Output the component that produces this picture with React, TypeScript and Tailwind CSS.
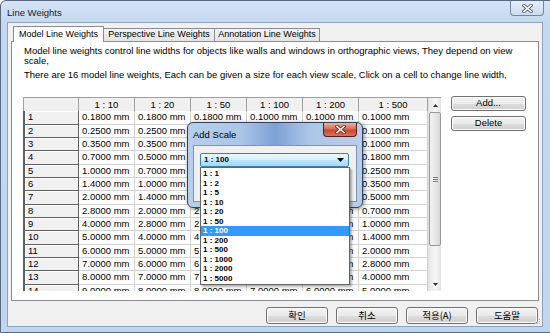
import React from 'react'

const scales = ['1 : 10', '1 : 20', '1 : 50', '1 : 100', '1 : 200', '1 : 500']

const weights: string[][] = [
  ['0.1800', '0.1800', '0.1800', '0.1000', '0.1000', '0.1000'],
  ['0.2500', '0.2500', '0.2500', '0.1000', '0.1000', '0.1000'],
  ['0.3500', '0.3500', '0.3500', '0.1800', '0.1000', '0.1000'],
  ['0.7000', '0.5000', '0.5000', '0.2500', '0.1800', '0.1800'],
  ['1.0000', '0.7000', '0.7000', '0.3500', '0.2500', '0.2500'],
  ['1.4000', '1.0000', '1.0000', '0.5000', '0.3500', '0.3500'],
  ['2.0000', '1.4000', '1.4000', '0.7000', '0.5000', '0.5000'],
  ['2.8000', '2.0000', '2.0000', '1.0000', '0.7000', '0.7000'],
  ['4.0000', '2.8000', '2.8000', '1.4000', '1.0000', '1.0000'],
  ['5.0000', '4.0000', '4.0000', '2.0000', '1.4000', '1.4000'],
  ['6.0000', '5.0000', '5.0000', '2.8000', '2.0000', '2.0000'],
  ['7.0000', '6.0000', '6.0000', '4.0000', '2.8000', '2.8000'],
  ['8.0000', '7.0000', '7.0000', '5.0000', '4.0000', '4.0000'],
  ['9.0000', '8.0000', '8.0000', '7.0000', '6.0000', '5.0000'],
]

const scaleOptions = ['1 : 1', '1 : 2', '1 : 5', '1 : 10', '1 : 20', '1 : 50', '1 : 100', '1 : 200', '1 : 500', '1 : 1000', '1 : 2000', '1 : 5000']

function WinButton({ children, className = '' }: { children: React.ReactNode; className?: string }) {
  return (
    <div
      className={`flex items-center justify-center rounded-[3px] border border-[#707070] bg-[linear-gradient(180deg,#f2f2f2_0%,#ebebeb_50%,#dddddd_51%,#cfcfcf_100%)] shadow-[inset_0_0_0_1px_#fcfcfc] ${className}`}
    >
      {children}
    </div>
  )
}

function CloseGlyph({ fill = '#fff', outline = '#59606b' }: { fill?: string; outline?: string }) {
  return (
    <svg width="11" height="9" viewBox="0 0 11 9">
      <path d="M2 1.5 L9 7.5 M9 1.5 L2 7.5" stroke={outline} strokeWidth="3.4" strokeLinecap="square" />
      <path d="M2 1.5 L9 7.5 M9 1.5 L2 7.5" stroke={fill} strokeWidth="1.6" strokeLinecap="square" />
    </svg>
  )
}

function Scrollbar() {
  return (
    <div className="flex w-[13px] flex-col border-l border-[#e3e3e3] bg-[linear-gradient(90deg,#e6e6e6,#f4f4f4_40%,#f4f4f4_60%,#e6e6e6)]">
      <div className="flex h-[14px] items-center justify-center">
        <svg width="5" height="3" viewBox="0 0 5 3">
          <path d="M0 3 L2.5 0 L5 3 Z" fill="#333" />
        </svg>
      </div>
      <div className="flex h-[134px] items-center justify-center rounded-[2px] border border-[#979797] bg-[linear-gradient(90deg,#f3f3f3,#e8e8e8_50%,#d8d8d8)]">
        <div className="flex flex-col gap-[1px]">
          <div className="h-px w-[5px] bg-[#7e7e7e]" />
          <div className="h-px w-[5px] bg-[#7e7e7e]" />
          <div className="h-px w-[5px] bg-[#7e7e7e]" />
        </div>
      </div>
      <div className="flex-1" />
      <div className="flex h-[14px] items-center justify-center">
        <svg width="5" height="3" viewBox="0 0 5 3">
          <path d="M0 0 L2.5 3 L5 0 Z" fill="#333" />
        </svg>
      </div>
    </div>
  )
}

function WeightGrid() {
  return (
    <div className="flex h-[194px] w-[418px] overflow-hidden border-t border-[#a0a0a0]">
      <div className="grid h-max w-[405px] grid-cols-[56px_56px_56px_56px_56px_56px_69px] auto-rows-[13.33px] text-[9.5px] leading-[12px] text-black">
        <div className="h-[15px] border-b border-l border-r border-[#a0a0a0] bg-[#f0f0f0]" />
        {scales.map((s) => (
          <div key={s} className="flex h-[15px] items-center justify-center border-b border-r border-[#a0a0a0] bg-[#f0f0f0]">
            {s}
          </div>
        ))}
        {weights.map((row, i) => (
          <React.Fragment key={i}>
            <div className="flex items-center border-b border-l-2 border-r border-[#5f5f5f] bg-[#f0f0f0] pl-[3px] shadow-[inset_1px_1px_0_#fff]">
              {i + 1}
            </div>
            {row.map((v, j) => (
              <div key={j} className="flex items-center border-b border-r border-[#d2d2d2] bg-white pl-[3px]">
                {v} mm
              </div>
            ))}
          </React.Fragment>
        ))}
      </div>
      <Scrollbar />
    </div>
  )
}

function AddScaleDialog() {
  return (
    <div className="absolute left-[187px] top-[122px] z-20 flex h-[86px] w-[176px] flex-col rounded-[6px] border border-[#34435a] bg-[linear-gradient(90deg,#b8cfea_0%,#acc6e7_30%,#7ea2d6_50%,#acc6e7_70%,#b8cfea_100%)] shadow-[1px_1px_4px_rgba(0,0,0,0.45)]">
      <div className="flex h-[22px] items-start justify-between">
        <span className="mt-[5px] pl-[5px] text-[9.5px] text-black">Add Scale</span>
        <div className="mr-[5px] flex h-[14px] w-[34px] items-center justify-center rounded-b-[4px] border border-t-0 border-[#5a1e16] bg-[linear-gradient(180deg,#eab1a3_0%,#d7705a_45%,#c7472f_55%,#d5765c_100%)]">
          <CloseGlyph fill="#fff" outline="#7b2a1c" />
        </div>
      </div>
      <div className="relative mx-[5px] mb-[5px] flex-1 border border-[#7d93b3] bg-[#f0f0f0]">
        <div className="ml-[6px] mt-[7px] flex h-[14px] w-[149px] items-center justify-between rounded-[2px] border border-[#3c7fb1] bg-[linear-gradient(180deg,#eaf6fd_0%,#d9f0fc_45%,#bee6fd_50%,#a7d9f5_100%)] pl-[3px] pr-[4px]">
          <span className="text-[8px] font-bold leading-none text-black">1 : 100</span>
          <svg width="7" height="4" viewBox="0 0 7 4">
            <path d="M0 0 L7 0 L3.5 4 Z" fill="#000" />
          </svg>
        </div>
        <div className="absolute left-[6px] top-[21px] z-30 flex w-[150px] flex-col border border-[#646464] bg-white py-[1px] shadow-[2px_2px_2px_rgba(0,0,0,0.3)]">
          {scaleOptions.map((o) => (
            <div
              key={o}
              className={`h-[9.5px] pl-[2px] text-[8px] font-bold leading-[9.5px] ${o === '1 : 100' ? 'bg-[#3399ff] text-white' : 'text-black'}`}
            >
              {o}
            </div>
          ))}
        </div>
      </div>
    </div>
  )
}

export default function App() {
  const tabs = [
    { label: 'Perspective Line Weights', w: 'w-[112px]' },
    { label: 'Annotation Line Weights', w: 'w-[106px]' },
  ]

  return (
    <div className="relative h-[333px] w-[550px] overflow-hidden bg-white font-['Liberation_Sans',Arial,sans-serif]">
      <div className="flex h-[333px] w-[556px] flex-col rounded-t-[6px] border border-[#5a6780] bg-[linear-gradient(180deg,#d6e4f5_0px,#c4d8ef_22px,#c1d5ee_100%)]">
        <div className="flex h-[21px] items-start justify-between">
          <span className="mt-[5px] pl-[6px] text-[9.5px] text-[#1b1b1b]">Line Weights</span>
          <div className="mr-[11px] flex h-[15px] w-[34px] items-center justify-center rounded-b-[4px] border border-t-0 border-[#7487a3] bg-[linear-gradient(180deg,#e4edf8,#cbdcf0)]">
            <CloseGlyph />
          </div>
        </div>

        <div className="mb-[5px] ml-[6px] mr-[12px] flex flex-1 flex-col border border-[#8ea3bf] bg-[#f0f0f0]">
          <div className="flex h-[18px] items-end pl-[5px] pt-[3px] text-[9px] text-black">
            <div className="relative z-10 -mb-px flex h-[16px] w-[91px] items-center justify-center border border-b-0 border-[#898c95] bg-white">
              Model Line Weights
            </div>
            {tabs.map((t) => (
              <div
                key={t.label}
                className={`-ml-px flex h-[13px] ${t.w} items-center justify-center border border-b-0 border-[#898c95] bg-[linear-gradient(180deg,#f3f3f3,#e4e4e4)]`}
              >
                {t.label}
              </div>
            ))}
          </div>

          <div className="mx-[3px] flex flex-1 flex-col border border-[#898c95] bg-white">
            <div className="pl-[12px] pt-[4px] text-[9.5px] leading-[10px] text-black">
              <div className="whitespace-nowrap">
                Model line weights control line widths for objects like walls and windows in orthographic views, They depend on view
              </div>
              <div className="whitespace-nowrap">scale,</div>
              <div className="mt-[4px] whitespace-nowrap">
                There are 16 model line weights, Each can be given a size for each view scale, Click on a cell to change line width,
              </div>
            </div>

            <div className="ml-[11px] mt-[17px] flex gap-[10px]">
              <WeightGrid />
              <div className="-mt-px flex flex-col gap-[5px] text-[9.5px] text-black">
                <WinButton className="h-[15px] w-[75px]">Add...</WinButton>
                <WinButton className="h-[15px] w-[75px]">Delete</WinButton>
              </div>
            </div>
          </div>

          <div className="relative flex h-[25px] items-start justify-end gap-[8px] pr-[4px] pt-[6px] font-['Noto_Sans_CJK_KR',sans-serif] text-[9.5px] text-black">
            <WinButton className="h-[17px] w-[62px]">확인</WinButton>
            <WinButton className="h-[17px] w-[62px]">취소</WinButton>
            <WinButton className="h-[17px] w-[62px]">적용(A)</WinButton>
            <WinButton className="h-[17px] w-[62px]">도움말</WinButton>
            <svg className="absolute bottom-px right-px" width="7" height="7" viewBox="0 0 7 7">
              <rect x="5" y="1" width="1" height="1" fill="#b5b5b5" />
              <rect x="3" y="3" width="1" height="1" fill="#b5b5b5" />
              <rect x="5" y="3" width="1" height="1" fill="#b5b5b5" />
              <rect x="1" y="5" width="1" height="1" fill="#b5b5b5" />
              <rect x="3" y="5" width="1" height="1" fill="#b5b5b5" />
              <rect x="5" y="5" width="1" height="1" fill="#b5b5b5" />
            </svg>
          </div>
        </div>
      </div>

      <AddScaleDialog />
    </div>
  )
}
